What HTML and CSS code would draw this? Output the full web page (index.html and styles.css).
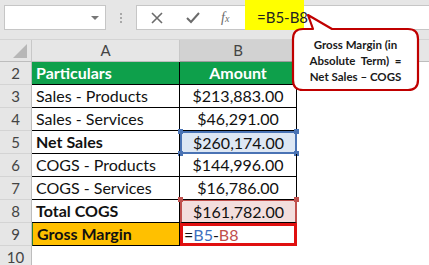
FILE: index.html
```html
<!DOCTYPE html>
<html>
<head>
<meta charset="utf-8">
<link rel="stylesheet" href="styles.css">
</head>
<body>
<div class="app">
  <div class="topbar">
    <div class="namebox"><span class="caret"></span></div>
    <div class="dots"><i></i><i></i><i></i></div>
    <div class="fbar">
      <svg class="ico" width="14" height="14" viewBox="0 0 14 14"><path d="M2 2 L12 12 M12 2 L2 12" stroke="#6b6b6b" stroke-width="1.6" fill="none"/></svg>
      <svg class="ico" width="16" height="14" viewBox="0 0 16 14"><path d="M2 7 L6 11 L14 2" stroke="#6b6b6b" stroke-width="2" fill="none"/></svg>
      <span class="fx"><i>f</i><small>x</small></span>
      <span class="formula">=B5-B8</span>
    </div>
  </div>
  <div class="sheet">
    <div class="corner"><span class="tri"></span></div>
    <div class="ch">A</div>
    <div class="ch sel">B</div>
    <div class="ch blank"></div>

    <div class="rh">2</div>
    <div class="c hd">Particulars</div>
    <div class="c hd num">Amount</div>
    <div class="e"></div>

    <div class="rh">3</div>
    <div class="c">Sales - Products</div>
    <div class="c num">$213,883.00</div>
    <div class="e"></div>

    <div class="rh">4</div>
    <div class="c">Sales - Services</div>
    <div class="c num">$46,291.00</div>
    <div class="e"></div>

    <div class="rh">5</div>
    <div class="c b">Net Sales</div>
    <div class="c num ref-blue">$260,174.00<span class="k tl"></span><span class="k tr"></span><span class="k bl"></span><span class="k br"></span></div>
    <div class="e"></div>

    <div class="rh">6</div>
    <div class="c">COGS - Products</div>
    <div class="c num">$144,996.00</div>
    <div class="e"></div>

    <div class="rh">7</div>
    <div class="c">COGS - Services</div>
    <div class="c num">$16,786.00</div>
    <div class="e"></div>

    <div class="rh">8</div>
    <div class="c b">Total COGS</div>
    <div class="c num ref-red">$161,782.00<span class="k tl"></span><span class="k tr"></span></div>
    <div class="e"></div>

    <div class="rh">9</div>
    <div class="c b gm">Gross Margin</div>
    <div class="c edit">=<span class="bl-t">B5</span>-<span class="rd-t">B8</span></div>
    <div class="e"></div>

    <div class="rh last">10</div>
    <div class="e"></div>
    <div class="e"></div>
    <div class="e"></div>
  </div>
  <div class="callout">
    <svg width="140" height="84" viewBox="0 0 140 84">
      <path d="M25 19 L20 5 L44 19 L120 19 Q130 19 130 29 L130 70 Q130 80 120 80 L15 80 Q5 80 5 70 L5 29 Q5 19 15 19 Z" fill="#fff" stroke="#c00000" stroke-width="2.2" stroke-linejoin="round"/>
    </svg>
    <div class="ctext">Gross Margin (in<br>Absolute&nbsp; Term)&nbsp; =<br>Net Sales – COGS</div>
  </div>
</div>
</body>
</html>
```
FILE: styles.css
```css
* { box-sizing: border-box; }
html, body { margin: 0; padding: 0; background: #fff; }
.app {
  position: relative;
  width: 429px;
  height: 265px;
  overflow: hidden;
  font-family: Lato, "Open Sans", sans-serif;
}
.topbar {
  height: 40px;
  background: #e6e6e6;
  display: flex;
  align-items: flex-start;
  padding: 5px 0 0 4px;
  border-bottom: 1px solid #d4d4d4;
}
.namebox {
  width: 102px;
  height: 25px;
  background: #fff;
  border: 1px solid #c6c6c6;
  position: relative;
}
.caret {
  position: absolute;
  right: 6px;
  top: 10px;
  border-left: 4px solid transparent;
  border-right: 4px solid transparent;
  border-top: 4px solid #777;
}
.dots {
  width: 30px;
  display: flex;
  flex-direction: column;
  align-items: center;
  gap: 2px;
  padding-top: 8px;
}
.dots i {
  width: 2px;
  height: 2px;
  background: #a8a8a8;
}
.fbar {
  flex: 1;
  height: 25px;
  background: #fff;
  border: 1px solid #c6c6c6;
  border-right: none;
  display: flex;
  align-items: center;
  padding-left: 13px;
}
.ico { margin-right: 21px; }
.fx {
  font-family: "Liberation Serif", serif;
  color: #6b6b6b;
  font-size: 14px;
  width: 24px;
  margin-left: -1px;
}
.fx small { font-size: 10px; font-style: italic; }
.formula {
  align-self: flex-start;
  margin-top: -6px;
  height: 30px;
  width: 59px;
  white-space: nowrap;
  background: #ffff00;
  font-family: Lato, sans-serif;
  font-size: 15px;
  color: #222;
  padding: 8px 0 0 12px;
}
.sheet {
  display: grid;
  grid-template-columns: 32px 148px 117px 1fr;
  grid-template-rows: 22px repeat(9, 23px);
  font-size: 16px;
}
.corner {
  background: #e6e6e6;
  border-right: 1px solid #c8c8c8;
  border-bottom: 1px solid #bdbdbd;
  position: relative;
}
.tri {
  position: absolute;
  right: 4px;
  bottom: 3px;
  border-left: 14px solid transparent;
  border-bottom: 14px solid #b7b7b7;
}
.ch {
  background: #e6e6e6;
  border-right: 1px solid #c8c8c8;
  border-bottom: 1px solid #bdbdbd;
  text-align: center;
  color: #444;
  line-height: 21px;
  font-size: 15px;
}
.ch.sel { background: #d2d2d2; border-bottom: 1px solid #9c9c9c; }
.ch.blank { border-right: none; }
.rh {
  background: #e6e6e6;
  border-right: 1px solid #bdbdbd;
  border-bottom: 1px solid #d4d4d4;
  text-align: center;
  color: #444;
  line-height: 22px;
  font-size: 15px;
}
.c {
  position: relative;
  border-right: 1px solid #000;
  border-bottom: 1px solid #000;
  line-height: 22px;
  padding-left: 4px;
  color: #111;
  white-space: nowrap;
}
.num { text-align: center; padding-left: 0; }
.hd { background: #0ea04b; color: #fff; font-weight: bold; }
.b { font-weight: bold; }
.gm { background: #ffc000; border-left: 1px solid #2e7d32; }
.ref-blue {
  background: #dde7f4;
  border: 2px solid #4a73b4;
  line-height: 19px;
}
.ref-red {
  background: #f3dedd;
  border-left: 2px solid #c0504d;
  border-right: 2px solid #c0504d;
  border-top: 1px solid #c0504d;
}
.k {
  position: absolute;
  width: 5px;
  height: 5px;
  background: #4a73b4;
}
.ref-red .k { background: #c0504d; }
.k.tl { left: -4px; top: -4px; }
.k.tr { right: -4px; top: -4px; }
.k.bl { left: -4px; bottom: -4px; }
.k.br { right: -4px; bottom: -4px; }
.edit {
  border: 3px solid #e01010;
  line-height: 17px;
  padding-left: 1px;
}
.bl-t { color: #3d6fc0; }
.rd-t { color: #c0504d; }
.e { background: #fff; }
.callout {
  position: absolute;
  left: 288px;
  top: 10px;
  width: 140px;
  height: 84px;
}
.callout svg { position: absolute; left: 0; top: 0; }
.ctext {
  position: absolute;
  left: 5px;
  top: 27px;
  width: 125px;
  text-align: center;
  font-weight: bold;
  font-size: 11.5px;
  line-height: 16px;
  color: #1a1a1a;
}
```
